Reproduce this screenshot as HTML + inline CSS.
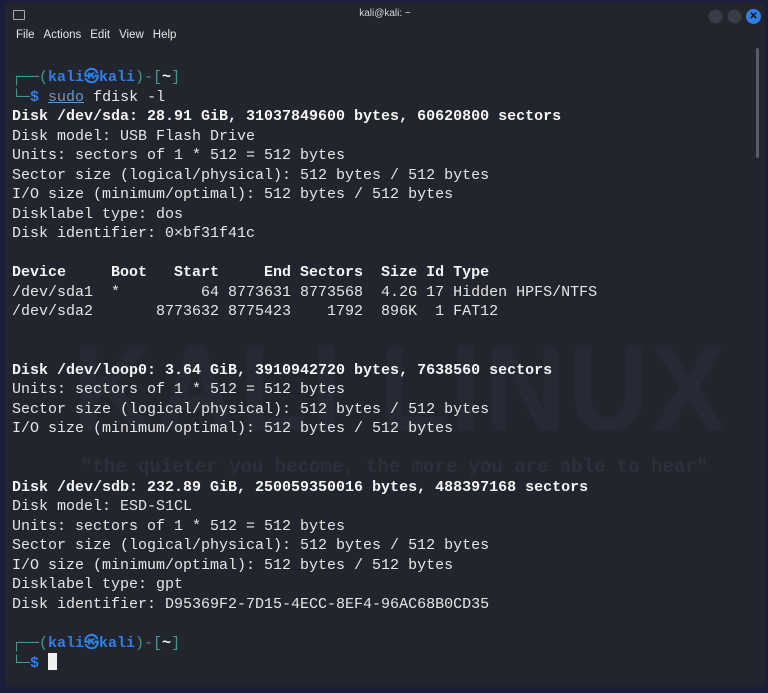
<!DOCTYPE html>
<html><head><meta charset="utf-8"><style>
html,body{margin:0;padding:0;width:768px;height:693px;overflow:hidden;background:#1b1e3a;}
.win{position:absolute;left:5px;top:3px;width:760px;height:684px;background:#23252e;border-radius:4px;overflow:hidden;}
.title{position:absolute;left:0;top:0;width:760px;text-align:center;top:5px;font:10px "Liberation Sans",sans-serif;color:#d8d8dc;}
.ticon{position:absolute;left:8px;top:7px;width:10px;height:8px;border:1px solid #aaa;border-radius:1px;}
.btn{position:absolute;top:6px;width:13px;height:13px;border-radius:50%;background:#3a3d48;border:1px solid #2c2e36;}
.menu{position:absolute;left:11px;top:26px;font:11.5px "Liberation Sans",sans-serif;color:#e6e6e6;}
.menu span{margin-right:9px}
.sb{position:absolute;left:751px;top:45px;width:3px;height:110px;background:#5a5d66;border-radius:2px;}
pre{position:absolute;left:7px;top:65px;margin:0;font:15px/19.5px "Liberation Mono",monospace;color:#e6e6e6;}
b{font-weight:bold;color:#f4f4f4}
.g{color:#3d9b8c}.k{color:#2f7fe6;font-weight:bold}.u{text-decoration:underline;color:#5a9bd8}
.wm{position:absolute;left:68px;top:326px;white-space:nowrap;font:bold 120px/120px "Liberation Sans",sans-serif;color:#272a35;letter-spacing:4px;transform:scaleX(0.92);transform-origin:left}
.q{position:absolute;left:76px;top:453px;white-space:nowrap;font:bold 19px "Liberation Mono",monospace;color:#2d303b;}
.cur{display:inline-block;width:9px;height:17px;background:#f0f0f0;vertical-align:-3px}
</style></head><body>
<div class="win">
<div class="ticon"></div>
<div class="title">kali@kali: ~</div>
<div class="btn" style="left:703px"></div>
<div class="btn" style="left:722px"></div>
<div class="btn" style="left:741px;background:#2f7fe6;border-color:#2f7fe6;color:#111;font:bold 10px/13px sans-serif;text-align:center">✕</div>
<div class="menu"><span>File</span><span>Actions</span><span>Edit</span><span>View</span><span>Help</span></div>
<div class="sb"></div>
<div class="wm">KALI LINUX</div>
<div class="q">"the quieter you become, the more you are able to hear"</div>
<pre><span class="g">┌──(</span><span class="k">kali㉿kali</span><span class="g">)-[</span><b>~</b><span class="g">]</span>
<span class="g">└─</span><span class="k">$</span> <span class="u">sudo</span> fdisk -l
<b>Disk /dev/sda: 28.91 GiB, 31037849600 bytes, 60620800 sectors</b>
Disk model: USB Flash Drive
Units: sectors of 1 * 512 = 512 bytes
Sector size (logical/physical): 512 bytes / 512 bytes
I/O size (minimum/optimal): 512 bytes / 512 bytes
Disklabel type: dos
Disk identifier: 0×bf31f41c

<b>Device     Boot   Start     End Sectors  Size Id Type</b>
/dev/sda1  *         64 8773631 8773568  4.2G 17 Hidden HPFS/NTFS
/dev/sda2       8773632 8775423    1792  896K  1 FAT12


<b>Disk /dev/loop0: 3.64 GiB, 3910942720 bytes, 7638560 sectors</b>
Units: sectors of 1 * 512 = 512 bytes
Sector size (logical/physical): 512 bytes / 512 bytes
I/O size (minimum/optimal): 512 bytes / 512 bytes


<b>Disk /dev/sdb: 232.89 GiB, 250059350016 bytes, 488397168 sectors</b>
Disk model: ESD-S1CL
Units: sectors of 1 * 512 = 512 bytes
Sector size (logical/physical): 512 bytes / 512 bytes
I/O size (minimum/optimal): 512 bytes / 512 bytes
Disklabel type: gpt
Disk identifier: D95369F2-7D15-4ECC-8EF4-96AC68B0CD35

<span class="g">┌──(</span><span class="k">kali㉿kali</span><span class="g">)-[</span><b>~</b><span class="g">]</span>
<span class="g">└─</span><span class="k">$</span> <span class="cur"></span></pre>
</div>
</body></html>
